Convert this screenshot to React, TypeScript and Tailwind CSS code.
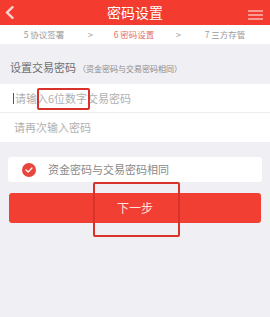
import React from 'react';

const font = { fontFamily: '"Noto Sans CJK SC", "Noto Sans", sans-serif' };

function Header() {
  return (
    <div className="relative flex h-[25px] items-center justify-center bg-[#f43b30]">
      {/* Back chevron */}
      <svg className="absolute left-[5px] top-[6px]" width="9" height="13" viewBox="0 0 9 13">
        <path d="M7.5 1.2 L2 6.5 L7.5 11.8" fill="none" stroke="#fbd3cf" strokeWidth="2.4" strokeLinecap="round" strokeLinejoin="round" />
      </svg>
      <span className="text-[14px] text-white">密码设置</span>
      {/* Menu */}
      <svg className="absolute right-[7px] top-[10px]" width="15" height="10" viewBox="0 0 15 10">
        <path d="M0 1 H15 M0 5 H15 M0 9 H15" stroke="#fbb8b2" strokeWidth="1.3" />
      </svg>
    </div>
  );
}

function Steps() {
  return (
    <div className="flex h-[19px] items-center bg-white text-[8.5px] text-[#9a9a9a]">
      <span className="w-[88px] text-center">5 协议签署</span>
      <span className="w-[4px] text-center text-[9px]">&gt;</span>
      <span className="w-[84px] text-center text-[#e4716a]">6 密码设置</span>
      <span className="w-[4px] text-center text-[9px]">&gt;</span>
      <span className="flex-1 text-center">7 三方存管</span>
    </div>
  );
}

export default function App() {
  return (
    <div className="min-h-[317px] w-[270px] bg-[#efeff4]" style={font}>
      <Header />
      <Steps />

      <div className="flex h-[40px] items-end pb-[9px] pl-[10px]">
        <span className="text-[11px] text-[#707070]">设置交易密码</span>
        <span className="ml-[2px] text-[8px] text-[#8a8a8a]">（资金密码与交易密码相同）</span>
      </div>

      <div className="bg-white">
        <div className="relative flex h-[29px] items-center border-b border-[#ececec] pl-[13px] text-[11px] text-[#b0b0b0]">
          <span className="mr-[1px] h-[11px] w-[1px] bg-[#555]" />
          <span>请输入6位数字交易密码</span>
          <div className="absolute left-[37px] top-[4px] h-[22px] w-[53px] rounded-[2px] border-2 border-[#d8322a]" />
        </div>
        <div className="flex h-[29px] items-center pl-[14px] text-[11px] text-[#b0b0b0]">
          请再次输入密码
        </div>
      </div>

      <div className="mx-[8px] mt-[15px] flex h-[25px] items-center rounded-[3px] bg-white pl-[14px]">
        <div className="flex h-[14px] w-[14px] items-center justify-center rounded-full bg-[#e8453d]">
          <svg width="8" height="6" viewBox="0 0 8 6">
            <path d="M1 3 L3.2 5 L7 1" fill="none" stroke="#fff" strokeWidth="1.3" strokeLinecap="round" strokeLinejoin="round" />
          </svg>
        </div>
        <span className="ml-[12px] text-[11px] text-[#8a8a8a]">资金密码与交易密码相同</span>
      </div>

      <div className="relative mx-[9px] mt-[11px]">
        <button className="flex h-[30px] w-full items-center justify-center rounded-[3px] bg-[#f23f33] text-[12px] text-[#fde2df]">
          下一步
        </button>
        <div className="absolute left-[84px] top-[-11px] h-[55px] w-[87px] rounded-[2px] border-2 border-[#d8322a]" />
      </div>
    </div>
  );
}
